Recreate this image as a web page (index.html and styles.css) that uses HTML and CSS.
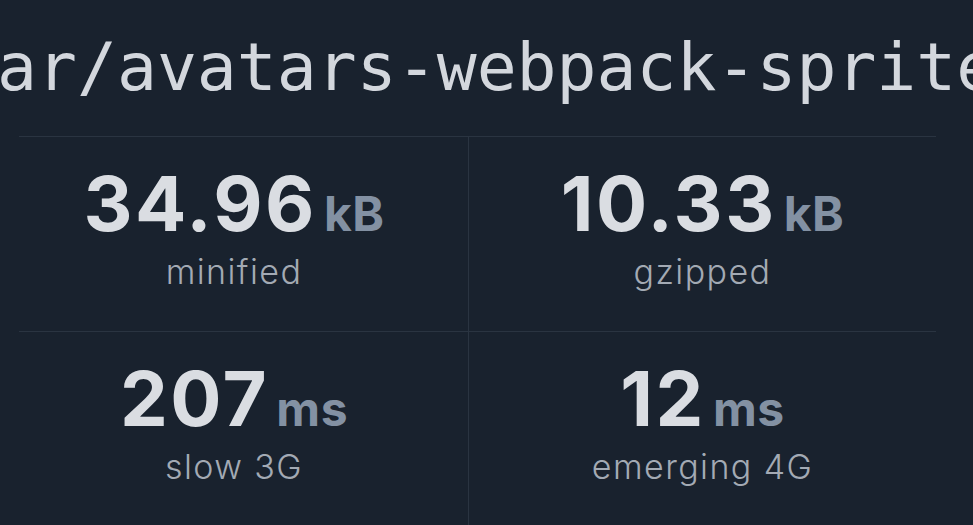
FILE: index.html
```html
<!DOCTYPE html>
<html lang="en">
<head>
<meta charset="utf-8">
<title>avatars-webpack-sprites</title>
<link rel="stylesheet" href="styles.css">
</head>
<body>
<main class="page">
  <h1 class="pkg-name">ar/avatars-webpack-sprite</h1>
  <section class="stats">
    <div class="stat-row">
      <div class="stat stat-left">
        <div class="stat-value">34.96<span class="stat-unit">kB</span></div>
        <div class="stat-label">minified</div>
      </div>
      <div class="stat stat-right">
        <div class="stat-value">10.33<span class="stat-unit">kB</span></div>
        <div class="stat-label">gzipped</div>
      </div>
    </div>
    <div class="stat-row">
      <div class="stat stat-left">
        <div class="stat-value">207<span class="stat-unit">ms</span></div>
        <div class="stat-label">slow 3G</div>
      </div>
      <div class="stat stat-right">
        <div class="stat-value">12<span class="stat-unit">ms</span></div>
        <div class="stat-label">emerging 4G</div>
      </div>
    </div>
  </section>
</main>
</body>
</html>
```
FILE: styles.css
```css
html, body {
  margin: 0;
  padding: 0;
  background: #19222e;
  overflow: hidden;
}

.page {
  width: 973px;
  height: 525px;
  overflow: hidden;
}

.pkg-name {
  margin: 0;
  padding-top: 34px;
  margin-bottom: 36px;
  margin-left: -3px;
  font-family: "DejaVu Sans Mono", "Liberation Mono", monospace;
  font-weight: normal;
  font-size: 66.4px;
  line-height: 1;
  color: #d3d7dd;
  white-space: nowrap;
}

.stats {
  display: flex;
  flex-direction: column;
}

.stat-row {
  display: grid;
  grid-template-columns: 449px 468px;
  width: 917px;
  margin-left: 19px;
  border-top: 1px solid #2a3441;
}

.stat {
  display: flex;
  flex-direction: column;
  align-items: center;
  padding-top: 28px;
  padding-bottom: 42px;
  gap: 14px;
}

.stat-left {
  margin-left: -19px;
}

.stat-right {
  border-left: 1px solid #2a3441;
}

.stat-value {
  font-family: Inter, "Noto Sans", sans-serif;
  font-weight: 700;
  font-size: 76px;
  line-height: 1;
  letter-spacing: 2.5px;
  color: #dadde2;
  white-space: nowrap;
}

.stat-unit {
  font-size: 48px;
  margin-left: 7px;
  letter-spacing: 0.5px;
  color: #8391a3;
}

.stat-label {
  font-family: Inter, "Noto Sans", sans-serif;
  font-weight: 300;
  font-size: 34px;
  line-height: 1;
  letter-spacing: 1.4px;
  color: #a3aab4;
}
```
